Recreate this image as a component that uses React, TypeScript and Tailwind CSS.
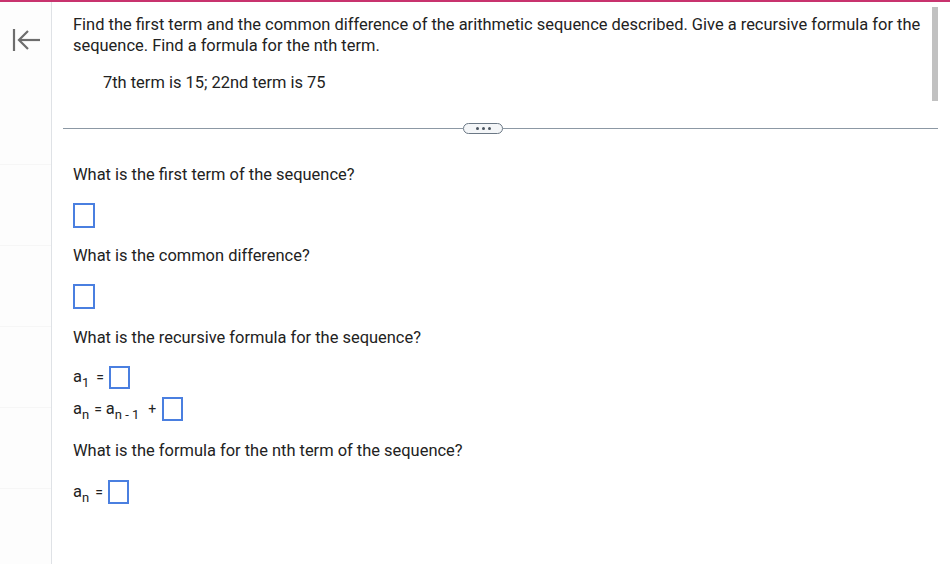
import React from "react";

const Box = ({ w = 22, h = 24 }: { w?: number; h?: number }) => (
  <span
    className="inline-block border-2 border-[#4a7fe0] bg-white align-middle"
    style={{ width: w, height: h }}
  />
);

const Sub = ({ children }: { children: React.ReactNode }) => (
  <sub className="text-[13px] relative top-[5px] align-baseline">{children}</sub>
);

export default function App() {
  return (
    <div
      className="relative w-[950px] h-[564px] overflow-hidden bg-white text-[#222]"
      style={{ fontFamily: "Roboto, 'Liberation Sans', sans-serif" }}
    >
      <div className="h-[2px] bg-[#c8336e]" />
      <div className="flex h-[562px]">
        {/* sidebar */}
        <div className="w-[52px] shrink-0 border-r border-[#dfe2e6] bg-[#fdfdfd] flex flex-col">
          <div className="h-[163px] border-b border-[#f6f6f6] flex items-start justify-center pt-[26px]">
            <svg width="30" height="24" viewBox="0 0 30 24" fill="none" stroke="#6d6d6d" strokeWidth="2.2">
              <path d="M3 1 V23" />
              <path d="M8 12 H29" />
              <path d="M17 3 L8 12 L17 21" />
            </svg>
          </div>
          <div className="h-[81px] border-b border-[#f6f6f6]" />
          <div className="h-[81px] border-b border-[#f6f6f6]" />
          <div className="h-[81px] border-b border-[#f6f6f6]" />
          <div className="h-[81px] border-b border-[#f6f6f6]" />
        </div>
        {/* content */}
        <div className="relative flex-1 pl-[21px] pr-[12px]">
          <div className="pt-[12px] pr-[6px] text-[16.45px] leading-[21px]">
            Find the first term and the common difference of the arithmetic sequence described. Give a recursive formula for the sequence. Find a formula for the nth term.
          </div>
          <div className="mt-[16px] pl-[30px] text-[16.45px] leading-[21px]">7th term is 15; 22nd term is 75</div>
          <div className="relative mt-[30px] ml-[-10px] mr-[0px] h-[10px] flex items-center">
            <div className="w-[400px] h-px bg-[#8c98a4]" />
            <div className="w-[40px] h-[11px] rounded-full border border-[#6b7885] bg-[#f4f6f8] flex items-center justify-center gap-[3px]">
              <span className="w-[3px] h-[3px] rounded-full bg-[#4b5560]" />
              <span className="w-[3px] h-[3px] rounded-full bg-[#4b5560]" />
              <span className="w-[3px] h-[3px] rounded-full bg-[#4b5560]" />
            </div>
            <div className="flex-1 h-px bg-[#8c98a4]" />
          </div>

          <div className="mt-[31px] text-[16.45px] leading-[21px]">What is the first term of the sequence?</div>
          <div className="mt-[18px] h-[25px]"><Box w={22} h={25} /></div>

          <div className="mt-[17px] text-[16.45px] leading-[21px]">What is the common difference?</div>
          <div className="mt-[18px] h-[25px]"><Box w={22} h={25} /></div>

          <div className="mt-[18px] text-[16.45px] leading-[21px]">What is the recursive formula for the sequence?</div>
          <div className="mt-[18px] flex items-center h-[23px] text-[16.45px]">
            <span>a<Sub>1</Sub></span>
            <span className="ml-[7px] text-[14px]">=</span>
            <span className="ml-[5px]"><Box w={21} h={23} /></span>
          </div>
          <div className="mt-[8px] flex items-center h-[24px] text-[16.45px]">
            <span>a<Sub>n</Sub></span>
            <span className="ml-[5px] text-[14px]">=</span>
            <span className="ml-[4px]">a<Sub>n - 1</Sub></span>
            <span className="ml-[9px] text-[14px]">+</span>
            <span className="ml-[6px]"><Box w={21} h={24} /></span>
          </div>

          <div className="mt-[19px] text-[16.45px] leading-[21px]">What is the formula for the nth term of the sequence?</div>
          <div className="mt-[19px] flex items-center h-[24px] text-[16.45px]">
            <span>a<Sub>n</Sub></span>
            <span className="ml-[6px] text-[14px]">=</span>
            <span className="ml-[5px]"><Box w={21} h={24} /></span>
          </div>

          <div className="absolute right-[12px] top-[5px] w-[6px] h-[94px] bg-[#c1c1c1]" />
        </div>
      </div>
    </div>
  );
}
